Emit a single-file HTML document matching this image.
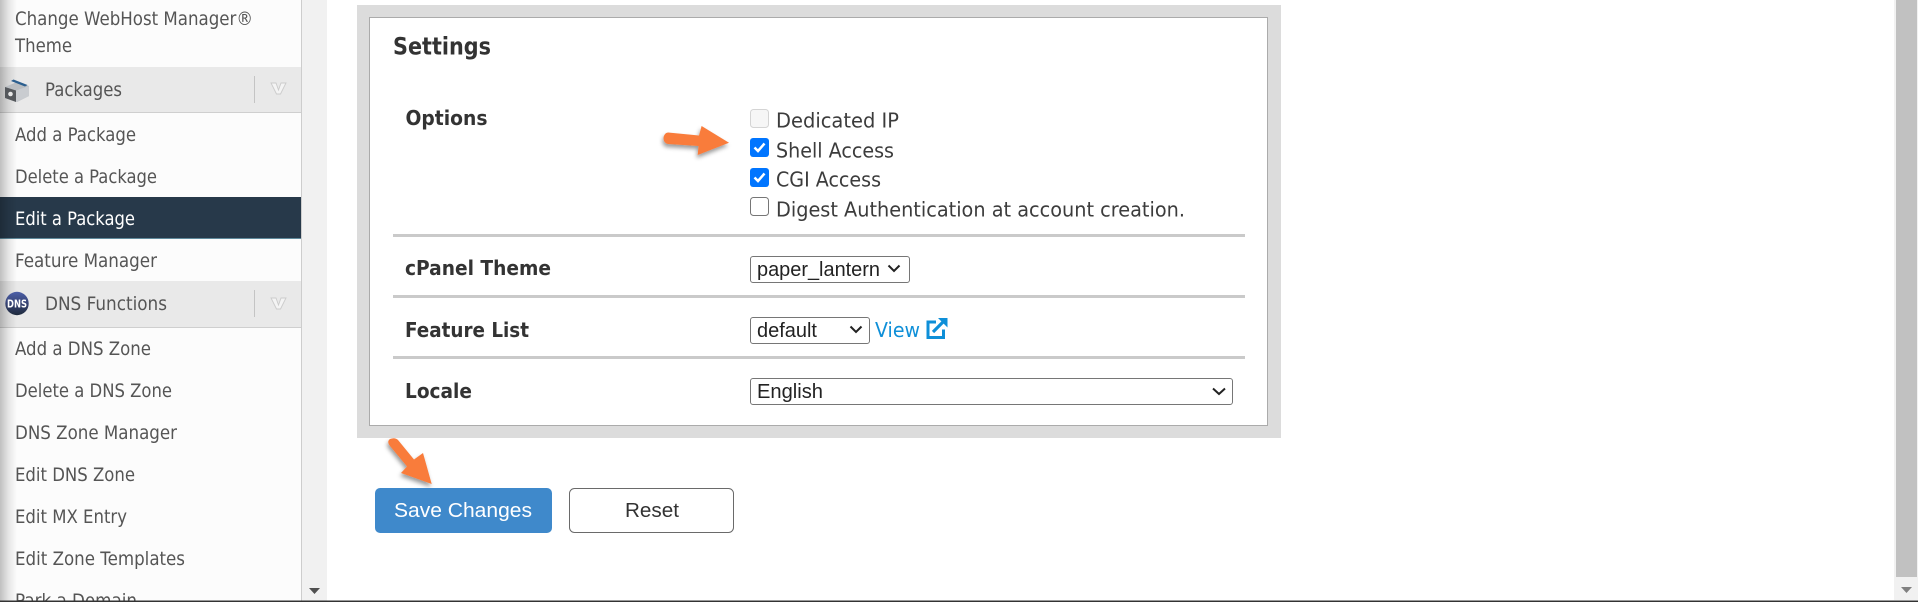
<!DOCTYPE html>
<html lang="en">
<head>
<meta charset="utf-8">
<title>Edit a Package</title>
<style>
html,body{margin:0;padding:0;background:#fff;width:1918px;height:602px;overflow:hidden}
svg{display:block}
text{font-family:"DejaVu Sans","Liberation Sans",sans-serif}
.s{font-size:18.3px;fill:#555}
.o{font-size:20px;fill:#3c3c3c}
.b{font-size:20px;font-weight:700;fill:#333}
.a{font-family:"Liberation Sans",Arial,sans-serif;font-size:20px;fill:#222}
</style>
</head>
<body>
<svg width="1918" height="602" viewBox="0 0 1918 602" xmlns="http://www.w3.org/2000/svg">
<defs>
<linearGradient id="edge" x1="0" x2="1" y1="0" y2="0"><stop offset="0" stop-color="#000" stop-opacity=".24"/><stop offset=".5" stop-color="#000" stop-opacity=".09"/><stop offset="1" stop-color="#000" stop-opacity="0"/></linearGradient>
<linearGradient id="dns" x1="0" x2="0" y1="0" y2="1"><stop offset="0" stop-color="#4c5fa8"/><stop offset=".55" stop-color="#34406e"/><stop offset="1" stop-color="#1e2a3c"/></linearGradient>
<filter id="sh" x="-30%" y="-30%" width="160%" height="170%"><feDropShadow dx="-1" dy="3" stdDeviation="2" flood-color="#000" flood-opacity=".4"/></filter>
</defs>
<rect width="1918" height="602" fill="#fff"/>

<!-- Sidebar -->
<rect x="0" y="0" width="301" height="602" fill="#fcfcfc"/>
<rect x="301" y="0" width="1" height="602" fill="#cdcdcd"/>
<rect x="302" y="0" width="25" height="602" fill="#f1f1f1"/>
<path d="M309 588h11l-5.500 6z" fill="#505050"/>

<text class="s" x="15" y="25" textLength="238" lengthAdjust="spacingAndGlyphs">Change WebHost Manager®</text>
<text class="s" x="15" y="52" textLength="57" lengthAdjust="spacingAndGlyphs">Theme</text>

<rect x="0" y="67" width="301" height="45" fill="#e9e9e9"/>
<rect x="0" y="112" width="301" height="1" fill="#cfcfcf"/>
<text class="s" x="45" y="96" textLength="77" lengthAdjust="spacingAndGlyphs">Packages</text>
<rect x="254" y="76" width="1" height="27" fill="#c4c4c4"/>
<path d="M271 83h5l2.500 7 2.500-7h5l-5.500 11h-4z" fill="#f4f4f4" stroke="#cbcbcb" stroke-width=".9"/>

<text class="s" x="15" y="141" textLength="121" lengthAdjust="spacingAndGlyphs">Add a Package</text>
<text class="s" x="15" y="183" textLength="142" lengthAdjust="spacingAndGlyphs">Delete a Package</text>
<rect x="0" y="197" width="301" height="42" fill="#27394a"/>
<rect x="0" y="238" width="301" height="1" fill="#5f8a9c"/>
<text class="s" x="15" y="225" textLength="120" lengthAdjust="spacingAndGlyphs" style="fill:#fff">Edit a Package</text>
<text class="s" x="15" y="267" textLength="142" lengthAdjust="spacingAndGlyphs">Feature Manager</text>

<rect x="0" y="281" width="301" height="46" fill="#e9e9e9"/>
<rect x="0" y="327" width="301" height="1" fill="#cfcfcf"/>
<text class="s" x="45" y="310" textLength="122" lengthAdjust="spacingAndGlyphs">DNS Functions</text>
<rect x="254" y="290" width="1" height="27" fill="#c4c4c4"/>
<path d="M271 298h5l2.500 7 2.500-7h5l-5.500 11h-4z" fill="#f4f4f4" stroke="#cbcbcb" stroke-width=".9"/>

<text class="s" x="15" y="355" textLength="136" lengthAdjust="spacingAndGlyphs">Add a DNS Zone</text>
<text class="s" x="15" y="397" textLength="157" lengthAdjust="spacingAndGlyphs">Delete a DNS Zone</text>
<text class="s" x="15" y="439" textLength="162" lengthAdjust="spacingAndGlyphs">DNS Zone Manager</text>
<text class="s" x="15" y="481" textLength="120" lengthAdjust="spacingAndGlyphs">Edit DNS Zone</text>
<text class="s" x="15" y="523" textLength="112" lengthAdjust="spacingAndGlyphs">Edit MX Entry</text>
<text class="s" x="15" y="565" textLength="170" lengthAdjust="spacingAndGlyphs">Edit Zone Templates</text>
<text class="s" x="15" y="607" textLength="122" lengthAdjust="spacingAndGlyphs">Park a Domain</text>

<rect x="0" y="0" width="17" height="602" fill="url(#edge)"/>

<!-- Packages icon -->
<path d="M5 87l12-5 12 4v10l-12 6-12-4z" fill="#b9bdc1"/>
<path d="M5 87l11 3.500v11.500l-11-4z" fill="#55585c"/>
<path d="M16 90.500l13-4.500v10l-13 6z" fill="#c9ccd0"/>
<path d="M11 81l2.500-1.500 14 5.500-2.500 1.500z" fill="#2c5f8f"/>
<circle cx="10.500" cy="94" r="2.300" fill="#e6e6e6"/>

<!-- DNS icon -->
<circle cx="17" cy="303.500" r="11.700" fill="url(#dns)"/>
<text x="17" y="307.500" text-anchor="middle" textLength="20" lengthAdjust="spacingAndGlyphs" style="font-size:11px;font-weight:700;fill:#fff">DNS</text>

<!-- Settings box -->
<rect x="357" y="5" width="924" height="433" fill="#dcdcdc"/>
<rect x="369.500" y="17.500" width="898" height="408" fill="#fff" stroke="#ababab"/>
<text x="393" y="54.500" textLength="98" lengthAdjust="spacingAndGlyphs" style="font-size:24px;font-weight:700;fill:#333">Settings</text>

<text class="b" x="405.500" y="125" textLength="82" lengthAdjust="spacingAndGlyphs">Options</text>

<!-- Checkboxes -->
<rect x="750.500" y="109.500" width="18" height="18" rx="3" fill="#f6f6f6" stroke="#d4d4d4"/>
<text class="o" x="776" y="127.500" textLength="123" lengthAdjust="spacingAndGlyphs">Dedicated IP</text>
<rect x="750" y="138" width="19" height="19" rx="3" fill="#0075ff"/>
<path d="M754.500 147.500l3.500 3.500 6.500-7.500" fill="none" stroke="#fff" stroke-width="2.500"/>
<text class="o" x="776" y="157.500" textLength="118" lengthAdjust="spacingAndGlyphs">Shell Access</text>
<rect x="750" y="168" width="19" height="19" rx="3" fill="#0075ff"/>
<path d="M754.500 177.500l3.500 3.500 6.500-7.500" fill="none" stroke="#fff" stroke-width="2.500"/>
<text class="o" x="776" y="186.500" textLength="105" lengthAdjust="spacingAndGlyphs">CGI Access</text>
<rect x="750.500" y="197.500" width="18" height="18" rx="3" fill="#fff" stroke="#767676"/>
<text class="o" x="776" y="216.500" textLength="409" lengthAdjust="spacingAndGlyphs">Digest Authentication at account creation.</text>

<!-- Row dividers -->
<rect x="393" y="234" width="852" height="3" fill="#cacaca"/>
<rect x="393" y="295" width="852" height="3" fill="#cacaca"/>
<rect x="393" y="356" width="852" height="3" fill="#cacaca"/>

<!-- cPanel Theme -->
<text class="b" x="405" y="275" textLength="146" lengthAdjust="spacingAndGlyphs">cPanel Theme</text>
<rect x="750.500" y="256.500" width="159" height="26" rx="2.500" fill="#fff" stroke="#767676"/>
<text class="a" x="757" y="276" textLength="123" lengthAdjust="spacingAndGlyphs">paper_lantern</text>
<path d="M888.500 265.500l5.500 5.500 5.500-5.500" fill="none" stroke="#222" stroke-width="2"/>

<!-- Feature List -->
<text class="b" x="405" y="337" textLength="124" lengthAdjust="spacingAndGlyphs">Feature List</text>
<rect x="750.500" y="317.500" width="119" height="26" rx="2.500" fill="#fff" stroke="#767676"/>
<text class="a" x="757" y="337" textLength="60" lengthAdjust="spacingAndGlyphs">default</text>
<path d="M850.500 326.500l5.500 5.500 5.500-5.500" fill="none" stroke="#222" stroke-width="2"/>
<text x="875" y="337" textLength="45" lengthAdjust="spacingAndGlyphs" style="font-size:20px;fill:#0e8fd8">View</text>
<path d="M936 322h-8v15.500h15.500v-8" fill="none" stroke="#0e8fd8" stroke-width="3"/>
<path d="M933 332l11-11" fill="none" stroke="#0e8fd8" stroke-width="3.200"/>
<path d="M938 318h9.500v9.500z" fill="#0e8fd8"/>

<!-- Locale -->
<text class="b" x="405" y="398" textLength="67" lengthAdjust="spacingAndGlyphs">Locale</text>
<rect x="750.500" y="378.500" width="482" height="26" rx="2.500" fill="#fff" stroke="#767676"/>
<text class="a" x="757" y="398" textLength="66" lengthAdjust="spacingAndGlyphs">English</text>
<path d="M1213 388.500l6 5.500 6-5.500" fill="none" stroke="#222" stroke-width="2"/>

<!-- Arrows -->
<path filter="url(#sh)" d="M668 132.500L699 135.500L701.600 126L729 142.700L697.700 155L698.500 146L668 144Q663.500 143 663.500 138Q664 133 668 132.500Z" fill="#f97b3a"/>
<path filter="url(#sh)" d="M398 440L414 459.500L423 453L431.700 484L401 473L407 466.500L390 446Q386.500 441.500 390 439Q395 437 398 440Z" fill="#f97b3a"/>

<!-- Buttons -->
<rect x="375" y="488" width="177" height="45" rx="5" fill="#3f89cb"/>
<text class="a" x="394" y="517" textLength="138" lengthAdjust="spacingAndGlyphs" style="fill:#fff">Save Changes</text>
<rect x="569.500" y="488.500" width="164" height="44" rx="5" fill="#fff" stroke="#6a6a6a"/>
<text class="a" x="625" y="517" textLength="54" lengthAdjust="spacingAndGlyphs" style="fill:#333">Reset</text>

<!-- Page scrollbar -->
<rect x="1894" y="0" width="24" height="600" fill="#f1f1f1"/>
<rect x="1896" y="0" width="21" height="577" fill="#c1c1c1"/>
<path d="M1901 587h11l-5.500 6z" fill="#808080"/>

<!-- Bottom edge -->
<rect x="0" y="600.500" width="1918" height="1.500" fill="#333"/>
</svg>
</body>
</html>
